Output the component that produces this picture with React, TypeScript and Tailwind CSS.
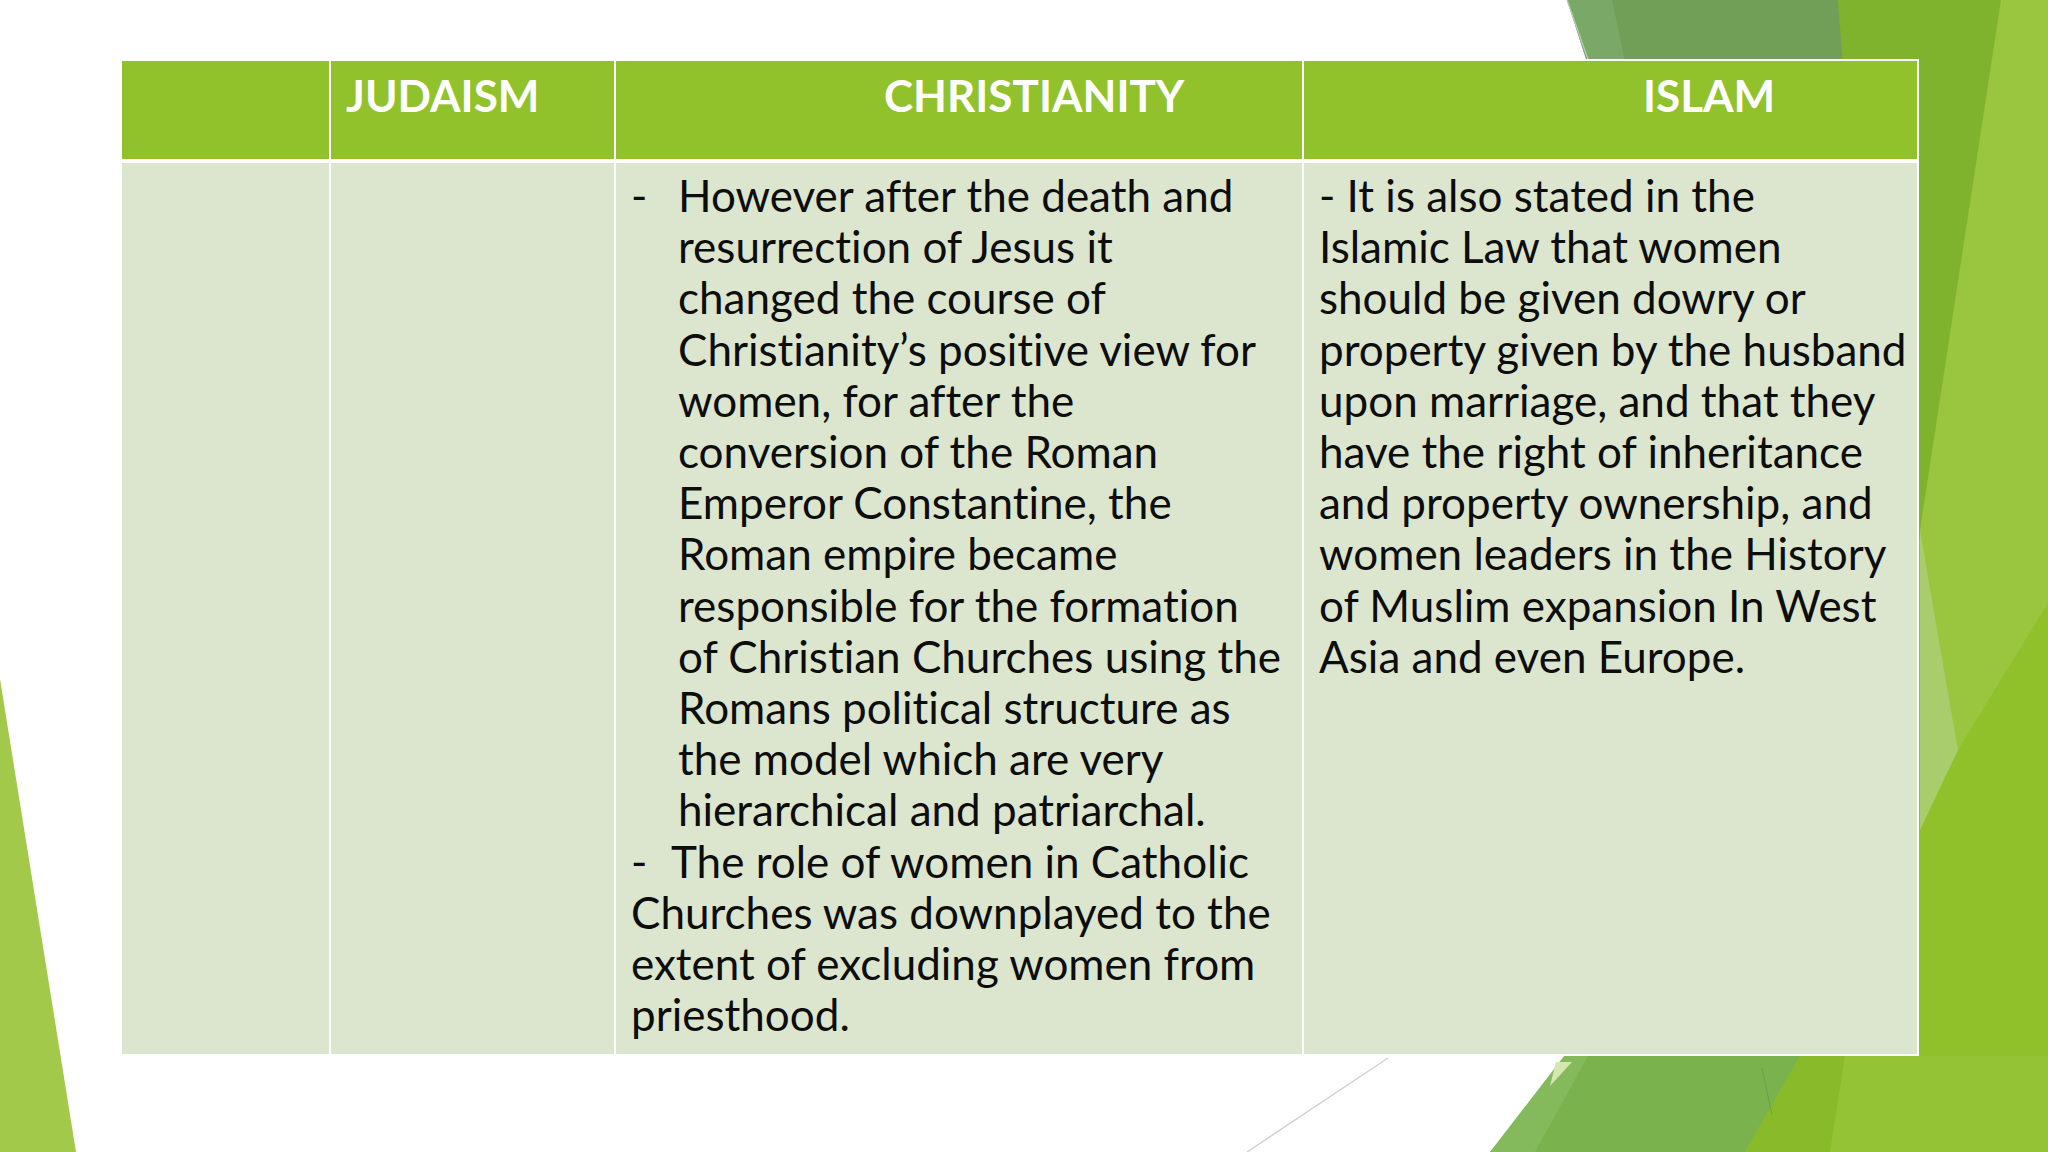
import React from "react";

const christianityLines = [
  "resurrection of Jesus it",
  "changed the course of",
  "Christianity\u2019s positive view for",
  "women, for after the",
  "conversion of the Roman",
  "Emperor Constantine, the",
  "Roman empire became",
  "responsible for the formation",
  "of Christian Churches using the",
  "Romans political structure as",
  "the model which are very",
  "hierarchical and patriarchal.",
];

const catholicLines = [
  "Churches was downplayed to the",
  "extent of excluding women from",
  "priesthood.",
];

const islamLines = [
  "- It is also stated in the",
  "Islamic Law that women",
  "should be given dowry or",
  "property given by the husband",
  "upon marriage, and that they",
  "have the right of inheritance",
  "and property ownership, and",
  "women leaders in the History",
  "of Muslim expansion In West",
  "Asia and even Europe.",
];

function Backdrop() {
  return (
    <svg
      className="absolute inset-0"
      width="2048"
      height="1152"
      viewBox="0 0 2048 1152">
      {/* left sliver */}
      <polygon points="0,679 76,1152 0,1152" fill="#a2c94a" />
      {/* right side base */}
      <polygon
        points="1567,0 2048,0 2048,1152 1490,1152 1600,1048 1600,59"
        fill="#90c12a"
      />
      {/* top muted band */}
      <polygon points="1567,0 1838,0 1852,62 1587,62" fill="#729f58" />
      <polygon points="1567,0 1612,0 1625,62 1587,62" fill="#7aa866" />
      <polygon points="1838,0 2003,0 1916,560 1880,560" fill="#7fb32e" />
      <polygon points="2001,0 2048,0 2048,603 1958,750 1920,530" fill="#9ac53e" />
      <polygon points="1920,530 1958,750 1920,830" fill="#a9cd6d" />
      {/* bottom right */}
      <polygon points="1572,1056 1800,1056 1745,1152 1490,1152" fill="#7ab24e" />
      <polygon points="1564,1056 1588,1056 1535,1152 1490,1152" fill="#85ba5c" />
      <polygon points="1556,1062 1572,1062 1550,1086" fill="#d5e6b0" />
      <polygon points="1800,1056 1845,1056 1830,1152 1745,1152" fill="#88ba2a" />
      <polygon points="1845,1056 2048,1056 2048,1152 1830,1152" fill="#94c335" />
      <line x1="1762" y1="1068" x2="1772" y2="1115" stroke="#6aa04a" strokeWidth="1" />
      {/* thin lines */}
      <line x1="1388" y1="1058" x2="1247" y2="1152" stroke="#cfcfd8" strokeWidth="1.5" />
      <line x1="1567" y1="0" x2="1589" y2="62" stroke="#c4c8c2" strokeWidth="1.2" />
    </svg>
  );
}

export default function App() {
  return (
    <div className="relative w-[2048px] h-[1152px] overflow-hidden bg-white font-['Lato','Noto_Sans',sans-serif]">
      <Backdrop />

      <div className="relative pt-[59px] pl-[120px]">
        <div className="w-[1799px] bg-white p-[2px] grid grid-cols-[207px_283px_686px_613px] grid-rows-[98px_891px] gap-x-[2px] gap-y-[4px]">
          {/* header row */}
          <div className="bg-[#91c22b]" />
          <div className="bg-[#91c22b] pl-[15px] pt-[10px] text-[44px] leading-[48px] font-bold text-white">
            JUDAISM
          </div>
          <div className="bg-[#91c22b] pl-[268px] pt-[10px] text-[44px] leading-[48px] font-bold text-white">
            CHRISTIANITY
          </div>
          <div className="bg-[#91c22b] pl-[339px] pt-[10px] text-[44px] leading-[48px] font-bold text-white">
            ISLAM
          </div>

          {/* body row */}
          <div className="bg-[#dce6cf]" />
          <div className="bg-[#dce6cf]" />
          <div className="bg-[#dce6cf] pl-[15px] pt-[7px] text-[44px] leading-[51.2px] text-[#0d0d0d] whitespace-nowrap [font-variant-ligatures:none]">
            <div className="flex">
              <span className="w-[47px] shrink-0">-</span>
              <div>
                <div>However after the death and</div>
                {christianityLines.map((l) => (
                  <div key={l}>{l}</div>
                ))}
              </div>
            </div>
            <div className="flex">
              <span className="w-[40px] shrink-0">-</span>
              <span>The role of women in Catholic</span>
            </div>
            {catholicLines.map((l) => (
              <div key={l}>{l}</div>
            ))}
          </div>
          <div className="bg-[#dce6cf] pl-[15px] pt-[7px] text-[44px] leading-[51.2px] text-[#0d0d0d] whitespace-nowrap [font-variant-ligatures:none]">
            {islamLines.map((l) => (
              <div key={l}>{l}</div>
            ))}
          </div>
        </div>
      </div>
    </div>
  );
}
